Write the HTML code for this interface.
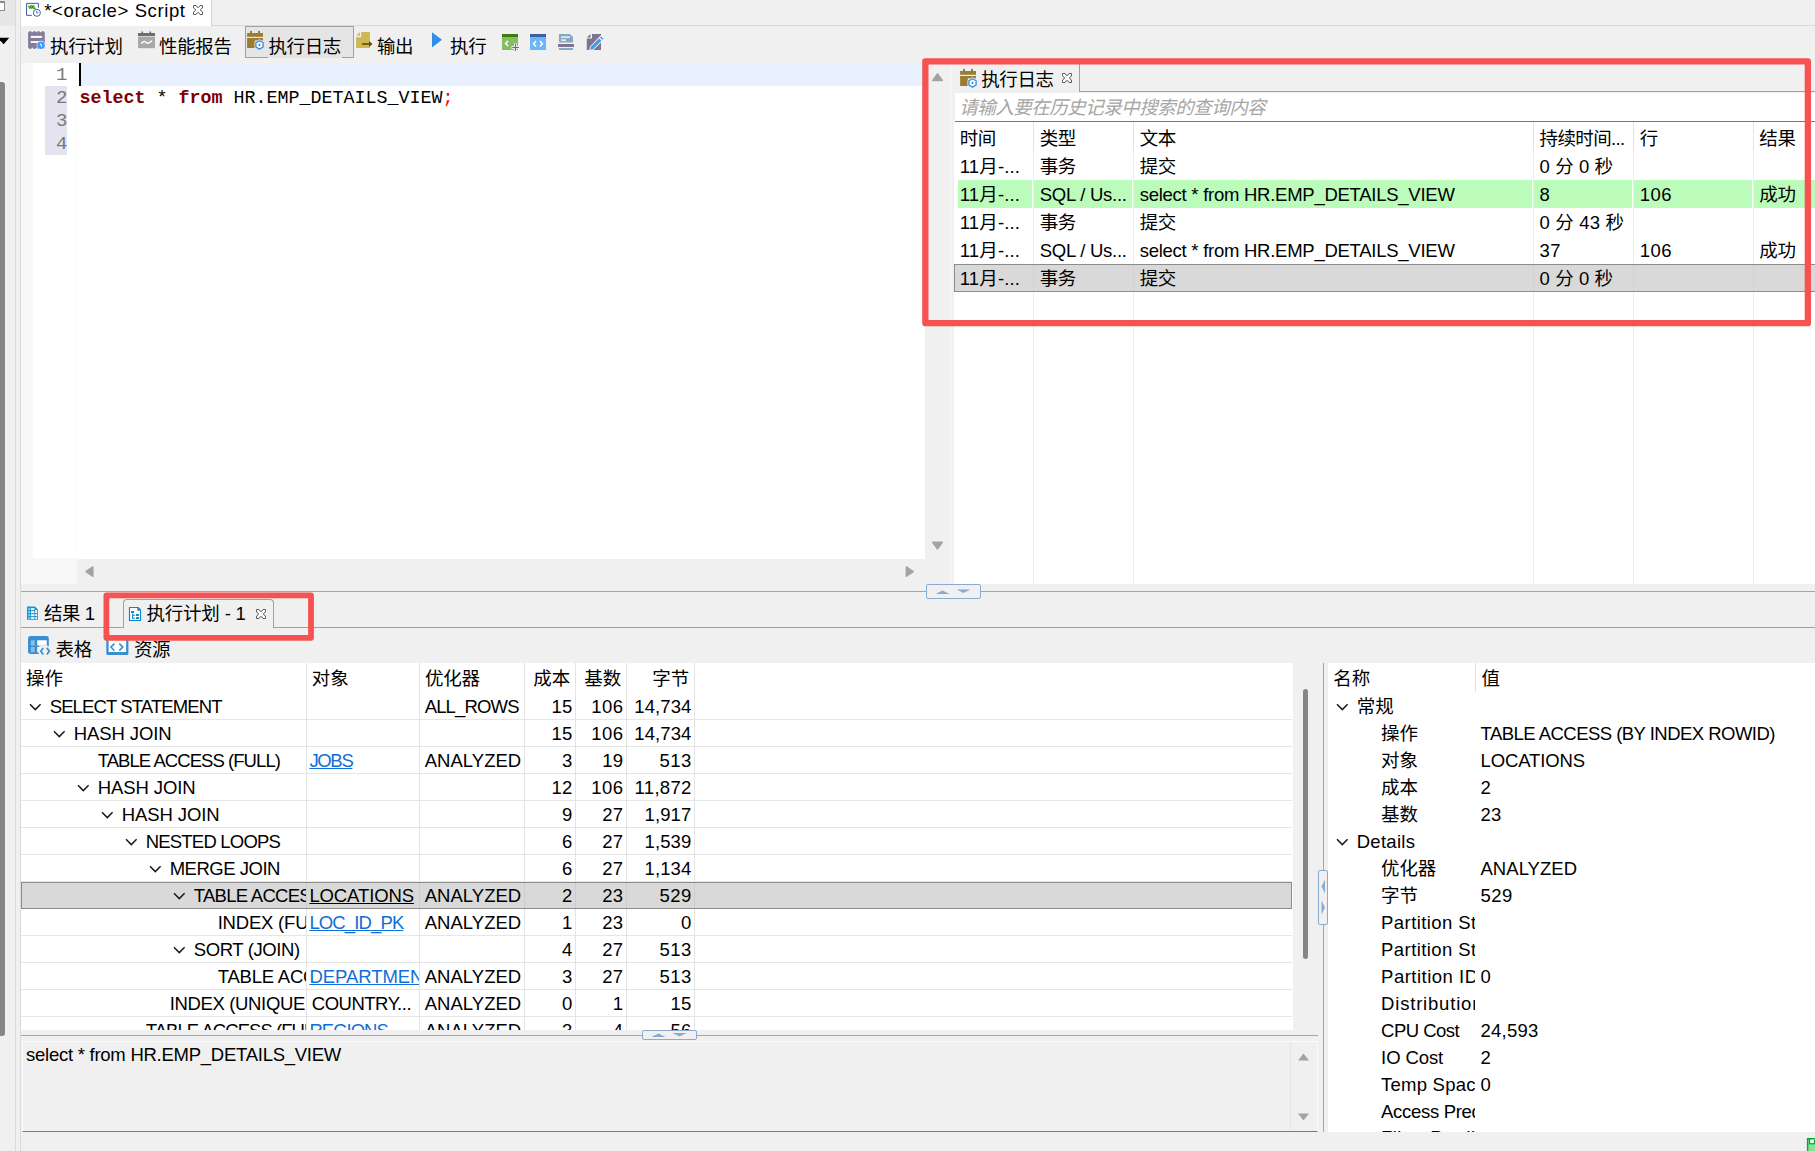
<!DOCTYPE html>
<html lang="zh"><head><meta charset="utf-8"><title>oracle Script</title>
<style>
html,body{margin:0;padding:0}
body{width:1815px;height:1151px;position:relative;overflow:hidden;background:#f0f0f0;color:#000;font-family:'Liberation Sans','Noto Sans CJK SC',sans-serif;font-size:18px}
div,svg{position:absolute;box-sizing:border-box}
.t{white-space:pre;font-size:18.5px}
.fs{font-family:'Liberation Sans','Noto Sans CJK SC',sans-serif}
.fm{font-family:'Liberation Mono','Noto Sans CJK SC',monospace}
.lk{color:#0f6fd6;text-decoration:underline;text-underline-offset:1px}
.ul{text-decoration:underline;text-underline-offset:1px}
.kw{color:#7f0000;font-weight:bold}
.ph{color:#a6a6a6;font-style:italic}
.ln{color:#787878}
</style></head><body>
<div style="left:0px;top:0px;width:15px;height:26px;background:#e7e7e7;"></div>
<div style="left:0px;top:1px;width:5px;height:10px;background:#fff;border:1px solid #8a8a8a;border-left:none;border-top-width:2px"></div>
<svg style="left:0px;top:37px" width="10" height="8" viewBox="0 0 10 8"><path d="M-2.2 0.8H9.3L3.6 7.2Z" fill="#000"/></svg>
<div style="left:15px;top:0px;width:1px;height:1151px;background:#dadada;"></div>
<div style="left:20px;top:0px;width:1px;height:1151px;background:#dadada;"></div>
<div style="left:0px;top:82px;width:5px;height:954px;background:#858585;border-radius:0 3px 3px 0"></div>
<div style="left:211px;top:25px;width:1604px;height:1px;background:#dadada;"></div>
<div style="left:21px;top:0px;width:191px;height:26px;background:#fff;border-right:1px solid #d4d4d4"></div>
<div class="t fs" style="top:-3.4px;height:27px;line-height:27px;letter-spacing:0.6px;left:44.3px;">*&lt;oracle&gt; Script</div>
<svg style="left:192px;top:4px" width="12" height="12" viewBox="0 0 12 12"><path d="M1.5 1.5H4L5.3 3.3H6.7L8 1.5H10.5V4L8.7 5.3V6.7L10.5 8V10.5H8L6.7 8.7H5.3L4 10.5H1.5V8L3.3 6.7V5.3L1.5 4Z" fill="#fff" stroke="#5c5c5c" stroke-width="1"/></svg>
<svg style="left:25px;top:2px" width="17" height="17" viewBox="0 0 17 17"><path d="M13.45 5.9V1.35H1.55V13.35H6.9" fill="none" stroke="#3b5ea8" stroke-width="1"/><path d="M3.3 5.2l1-1.6M4.3 6.6l1.6-2.6M6.6 3.6c-1.2 0-1.2 2.6 0 2.6s1.2-2.6 0-2.6zM8.9 3.2v3.2h1.6" stroke="#2f8a0f" stroke-width="1.2" fill="none"/><circle cx="11.9" cy="10.8" r="3.5" fill="#fff" stroke="#3b5ea8" stroke-width="1"/><path d="M11.7 8.9v2.1h1.6" stroke="#3b5ea8" stroke-width="0.9" fill="none"/></svg>
<div style="left:245px;top:26px;width:109px;height:32px;background:#e5e5e5;border:1px solid #a0a0a0"></div>
<svg style="left:27px;top:30px" width="19" height="20" viewBox="0 0 19 20"><path d="M1.1 2.4q2.0875-3 4.175 0q2.0875-3 4.175 0q2.0875-3 4.175 0q2.0875-3 4.175 0V17.4q-2.0875 3-4.175 0q-2.0875 3-4.175 0q-2.0875 3-4.175 0q-2.0875 3-4.175 0Z" fill="#857d9b"/><rect x="3.8" y="5.9" width="11.3" height="2" fill="#fff"/><rect x="3.8" y="11.1" width="11.3" height="1.9" fill="#fff"/><circle cx="14" cy="15.2" r="4.4" fill="#f0f0f0"/><circle cx="14" cy="15.2" r="3.8" fill="#3f9bff"/><path d="M13.2 13.6l1.7 3" stroke="#fff" stroke-width="1.1"/></svg>
<div class="t fs" style="top:32.7px;height:27px;line-height:27px;letter-spacing:-0.38px;left:50.1px;">执行计划</div>
<svg style="left:137px;top:31px" width="19" height="19" viewBox="0 0 19 19"><rect x="1" y="2" width="17" height="3" fill="#6e6e6e"/><rect x="1" y="5.6" width="17" height="11.6" fill="#a8a8a8"/><path d="M4 12.5l3.2-2.2 3.6 2.2 4.2-2.6" stroke="#fff" stroke-width="1.4" fill="none"/><rect x="4.5" y="0.5" width="1.6" height="2" fill="#6e6e6e"/><rect x="12.5" y="0.5" width="1.6" height="2" fill="#6e6e6e"/></svg>
<div class="t fs" style="top:32.7px;height:27px;line-height:27px;letter-spacing:-0.38px;left:159.1px;">性能报告</div>
<svg style="left:246px;top:30px" width="20" height="21" viewBox="0 0 20 21"><rect x="1.1" y="3" width="15.9" height="3.8" fill="#9a7d32"/><rect x="4" y="0.9" width="2" height="2.5" fill="#9a7d32"/><rect x="12" y="0.9" width="2" height="2.5" fill="#9a7d32"/><path d="M1.1 8.1H17V10.6H8.8V18H1.1Z" fill="#9a7d32"/><path d="M13.5 10.7l3.6 2.1v4.2l-3.6 2.1-3.6-2.1v-4.2Z" fill="#fff" stroke="#e5e5e5" stroke-width="2.6"/><path d="M13.5 10.7l3.6 2.1v4.2l-3.6 2.1-3.6-2.1v-4.2Z" fill="#fff" stroke="#2e8ae6" stroke-width="1.3" stroke-linejoin="round"/><circle cx="13.5" cy="14.9" r="1.1" fill="#2e8ae6"/></svg>
<div class="t fs" style="top:32.7px;height:27px;line-height:27px;letter-spacing:-0.38px;left:268.5px;">执行日志</div>
<div style="left:268px;top:57px;width:74px;height:1px;background:#e5e5e5;"></div>
<svg style="left:355px;top:30px" width="20" height="20" viewBox="0 0 20 20"><path d="M6.2 2H14.9V18H1.1V7.2H6.2Z" fill="#cdb94f"/><path d="M1.1 5.8L4.8 2.1V5.8Z" fill="#cdb94f"/><rect x="7" y="13.2" width="7.6" height="1.6" fill="#5f5210"/><path d="M14 11.1L17.6 14L14 16.9Z" fill="#5f5210"/></svg>
<div class="t fs" style="top:32.7px;height:27px;line-height:27px;letter-spacing:-0.51px;left:377.1px;">输出</div>
<svg style="left:431px;top:31px" width="12" height="18" viewBox="0 0 12 18"><path d="M1 1.2L11 8.8L1 16.4Z" fill="#2f8fe8"/></svg>
<div class="t fs" style="top:32.7px;height:27px;line-height:27px;letter-spacing:-0.26px;left:450.1px;">执行</div>
<svg style="left:502px;top:33px" width="18" height="18" viewBox="0 0 18 18"><rect x="0" y="1" width="16" height="3" fill="#3a7d0a"/><rect x="0" y="4" width="16" height="13" fill="#86bc64"/><path d="M6 8L3.6 10.5L6 13" fill="none" stroke="#fff" stroke-width="1.5"/><rect x="9" y="10" width="8" height="8" fill="#f0f0f0" opacity="0"/><path d="M9.5 14.5h8M13.5 10.5v8" stroke="#f0f0f0" stroke-width="3"/><path d="M10.2 14.5h6.8M13.5 11v6.9" stroke="#4c8c1c" stroke-width="1.1"/></svg>
<svg style="left:530px;top:33px" width="17" height="18" viewBox="0 0 17 18"><rect x="0" y="1" width="16" height="3" fill="#3b5fa2"/><rect x="0" y="4" width="16" height="13" fill="#6bb6f8"/><path d="M6 8L3.6 10.8L6 13.6M10 8l2.4 2.8L10 13.6" fill="none" stroke="#fff" stroke-width="1.5"/></svg>
<svg style="left:557px;top:33px" width="18" height="18" viewBox="0 0 18 18"><path d="M2 1H13L16 4V9.6H2Z" fill="#86a8c4"/><path d="M4 4.2h9M4 7.2h5" stroke="#fff" stroke-width="1.2"/><rect x="1" y="11" width="16" height="3" fill="#7d7590"/><rect x="2" y="15" width="14" height="2" fill="#86a8c4"/></svg>
<svg style="left:586px;top:33px" width="18" height="18" viewBox="0 0 18 18"><path d="M6 1H15V17H0.8V5.5H6Z" fill="#7d7590"/><path d="M0.8 4.5L4.5 1V4.5Z" fill="#7d7590"/><path d="M13 5.4L15.4 7.8L7 16.2L4.2 16.8L4.8 14ZM14 4.4L15 3.4L17.4 5.8L16.4 6.8Z" fill="#3f9ae8" stroke="#f0f0f0" stroke-width="1.8" stroke-linejoin="round"/><path d="M13 5.4L15.4 7.8L7 16.2L4.2 16.8L4.8 14ZM14 4.4L15 3.4L17.4 5.8L16.4 6.8Z" fill="#3f9ae8"/></svg>
<div style="left:21px;top:63px;width:12px;height:521px;background:#f8f8f8;"></div>
<div style="left:33px;top:63px;width:892px;height:496px;background:#fff;"></div>
<div style="left:33px;top:558px;width:44px;height:26px;background:#f8f8f8;"></div>
<div style="left:76px;top:63px;width:1px;height:495px;background:#fbfbfb;"></div>
<div style="left:79px;top:63px;width:846px;height:23px;background:#e8f2fe;"></div>
<div style="left:45px;top:86px;width:22px;height:69px;background:#e4e4f1;"></div>
<div style="left:79px;top:63px;width:2px;height:23px;background:#000;"></div>
<div class="t fm ln" style="top:64px;height:23px;line-height:23px;font-size:19px;right:1747.7px;">1</div>
<div class="t fm ln" style="top:87px;height:23px;line-height:23px;font-size:19px;right:1747.7px;">2</div>
<div class="t fm ln" style="top:110px;height:23px;line-height:23px;font-size:19px;right:1747.7px;">3</div>
<div class="t fm ln" style="top:133px;height:23px;line-height:23px;font-size:19px;right:1747.7px;">4</div>
<div class="t fm" style="left:79.5px;top:87px;height:23px;line-height:23px;font-size:18.33px"><span class="kw">select</span> * <span class="kw">from</span> HR.EMP_DETAILS_VIEW<span style="color:#f00">;</span></div>
<svg style="left:83px;top:565px" width="12" height="13" viewBox="0 0 12 13"><path d="M9.8 2L3 6.6L9.8 11.2Z" fill="#a3a3a3" stroke="#a3a3a3" stroke-width="1.6" stroke-linejoin="round"/></svg>
<svg style="left:904px;top:565px" width="12" height="13" viewBox="0 0 12 13"><path d="M2.4 2L9.2 6.6L2.4 11.2Z" fill="#a3a3a3" stroke="#a3a3a3" stroke-width="1.6" stroke-linejoin="round"/></svg>
<svg style="left:931px;top:72px" width="13" height="10" viewBox="0 0 13 10"><path d="M1.8 8.4L6.5 2L11.2 8.4Z" fill="#a3a3a3" stroke="#a3a3a3" stroke-width="1.6" stroke-linejoin="round"/></svg>
<svg style="left:931px;top:540px" width="13" height="10" viewBox="0 0 13 10"><path d="M1.8 2.4L6.5 8.8L11.2 2.4Z" fill="#a3a3a3" stroke="#a3a3a3" stroke-width="1.6" stroke-linejoin="round"/></svg>
<div style="left:950px;top:63px;width:1px;height:521px;background:#f8f8f8;"></div>
<div style="left:1079px;top:64px;width:1px;height:28px;background:#a0a0a0;"></div>
<div style="left:1079px;top:91px;width:736px;height:1px;background:#a0a0a0;"></div>
<svg style="left:959px;top:68px" width="20" height="21" viewBox="0 0 20 21"><rect x="1.1" y="3" width="15.9" height="3.8" fill="#9a7d32"/><rect x="4" y="0.9" width="2" height="2.5" fill="#9a7d32"/><rect x="12" y="0.9" width="2" height="2.5" fill="#9a7d32"/><path d="M1.1 8.1H17V10.6H8.8V18H1.1Z" fill="#9a7d32"/><path d="M13.5 10.7l3.6 2.1v4.2l-3.6 2.1-3.6-2.1v-4.2Z" fill="#fff" stroke="#f0f0f0" stroke-width="2.6"/><path d="M13.5 10.7l3.6 2.1v4.2l-3.6 2.1-3.6-2.1v-4.2Z" fill="#fff" stroke="#2e8ae6" stroke-width="1.3" stroke-linejoin="round"/><circle cx="13.5" cy="14.9" r="1.1" fill="#2e8ae6"/></svg>
<div class="t fs" style="top:65.6px;height:27px;line-height:27px;letter-spacing:-0.45px;left:981.3px;">执行日志</div>
<svg style="left:1061px;top:72px" width="12" height="12" viewBox="0 0 12 12"><path d="M1.5 1.5H4L5.3 3.3H6.7L8 1.5H10.5V4L8.7 5.3V6.7L10.5 8V10.5H8L6.7 8.7H5.3L4 10.5H1.5V8L3.3 6.7V5.3L1.5 4Z" fill="#fff" stroke="#5c5c5c" stroke-width="1"/></svg>
<div style="left:955px;top:93px;width:860px;height:29px;background:#fff;border-bottom:1px solid #7a7a7a"></div>
<div class="t fs ph" style="top:94px;height:28px;line-height:28px;letter-spacing:-0.5px;left:959.3px;">请输入要在历史记录中搜索的查询内容</div>
<div style="left:954px;top:122px;width:861px;height:462px;background:#fff;"></div>
<div style="left:1033px;top:122px;width:1px;height:462px;background:#e6eefa;"></div>
<div style="left:1033px;top:122px;width:1px;height:29px;background:#e2e2e2;"></div>
<div style="left:1133px;top:122px;width:1px;height:462px;background:#e6eefa;"></div>
<div style="left:1133px;top:122px;width:1px;height:29px;background:#e2e2e2;"></div>
<div style="left:1533px;top:122px;width:1px;height:462px;background:#e6eefa;"></div>
<div style="left:1533px;top:122px;width:1px;height:29px;background:#e2e2e2;"></div>
<div style="left:1633px;top:122px;width:1px;height:462px;background:#e6eefa;"></div>
<div style="left:1633px;top:122px;width:1px;height:29px;background:#e2e2e2;"></div>
<div style="left:1753px;top:122px;width:1px;height:462px;background:#e6eefa;"></div>
<div style="left:1753px;top:122px;width:1px;height:29px;background:#e2e2e2;"></div>
<div style="left:958px;top:180px;width:74px;height:28px;background:#bbfcbb;"></div>
<div style="left:1034px;top:180px;width:98px;height:28px;background:#bbfcbb;"></div>
<div style="left:1134px;top:180px;width:398px;height:28px;background:#bbfcbb;"></div>
<div style="left:1534px;top:180px;width:98px;height:28px;background:#bbfcbb;"></div>
<div style="left:1634px;top:180px;width:118px;height:28px;background:#bbfcbb;"></div>
<div style="left:1754px;top:180px;width:61px;height:28px;background:#bbfcbb;"></div>
<div style="left:954px;top:264px;width:861px;height:28px;background:#d9d9d9;border:1px solid #8c8c8c;border-right:none"></div>
<div style="left:1033px;top:265px;width:1px;height:26px;background:#cfd4dc;"></div>
<div style="left:1133px;top:265px;width:1px;height:26px;background:#cfd4dc;"></div>
<div style="left:1533px;top:265px;width:1px;height:26px;background:#cfd4dc;"></div>
<div style="left:1633px;top:265px;width:1px;height:26px;background:#cfd4dc;"></div>
<div style="left:1753px;top:265px;width:1px;height:26px;background:#cfd4dc;"></div>
<div class="t fs" style="top:124.5px;height:28px;line-height:28px;letter-spacing:-0.36px;left:959.7px;">时间</div>
<div class="t fs" style="top:124.5px;height:28px;line-height:28px;letter-spacing:-0.36px;left:1039.7px;">类型</div>
<div class="t fs" style="top:124.5px;height:28px;line-height:28px;letter-spacing:-0.36px;left:1139.7px;">文本</div>
<div class="t fs" style="top:124.5px;height:28px;line-height:28px;letter-spacing:-0.63px;left:1539.6px;">持续时间...</div>
<div class="t fs" style="top:124.5px;height:28px;line-height:28px;left:1639.7px;">行</div>
<div class="t fs" style="top:124.5px;height:28px;line-height:28px;letter-spacing:-0.26px;left:1759.3px;">结果</div>
<div class="t fs" style="top:153px;height:28px;line-height:28px;letter-spacing:0.17px;left:959.7px;">11月-...</div>
<div class="t fs" style="top:153px;height:28px;line-height:28px;letter-spacing:-0.36px;left:1039.7px;">事务</div>
<div class="t fs" style="top:153px;height:28px;line-height:28px;letter-spacing:-0.36px;left:1139.7px;">提交</div>
<div class="t fs" style="top:153px;height:28px;line-height:28px;letter-spacing:0.07px;left:1539.6px;">0 分 0 秒</div>
<div class="t fs" style="top:181px;height:28px;line-height:28px;letter-spacing:0.17px;left:959.7px;">11月-...</div>
<div class="t fs" style="top:181px;height:28px;line-height:28px;letter-spacing:-0.25px;left:1039.7px;">SQL / Us...</div>
<div class="t fs" style="top:181px;height:28px;line-height:28px;letter-spacing:-0.26px;left:1139.7px;">select * from HR.EMP_DETAILS_VIEW</div>
<div class="t fs" style="top:181px;height:28px;line-height:28px;left:1539.6px;">8</div>
<div class="t fs" style="top:181px;height:28px;line-height:28px;letter-spacing:0.54px;left:1639.7px;">106</div>
<div class="t fs" style="top:181px;height:28px;line-height:28px;letter-spacing:-0.26px;left:1759.3px;">成功</div>
<div class="t fs" style="top:209px;height:28px;line-height:28px;letter-spacing:0.17px;left:959.7px;">11月-...</div>
<div class="t fs" style="top:209px;height:28px;line-height:28px;letter-spacing:-0.36px;left:1039.7px;">事务</div>
<div class="t fs" style="top:209px;height:28px;line-height:28px;letter-spacing:-0.36px;left:1139.7px;">提交</div>
<div class="t fs" style="top:209px;height:28px;line-height:28px;letter-spacing:0.15px;left:1539.6px;">0 分 43 秒</div>
<div class="t fs" style="top:237px;height:28px;line-height:28px;letter-spacing:0.17px;left:959.7px;">11月-...</div>
<div class="t fs" style="top:237px;height:28px;line-height:28px;letter-spacing:-0.25px;left:1039.7px;">SQL / Us...</div>
<div class="t fs" style="top:237px;height:28px;line-height:28px;letter-spacing:-0.26px;left:1139.7px;">select * from HR.EMP_DETAILS_VIEW</div>
<div class="t fs" style="top:237px;height:28px;line-height:28px;letter-spacing:0.46px;left:1539.6px;">37</div>
<div class="t fs" style="top:237px;height:28px;line-height:28px;letter-spacing:0.54px;left:1639.7px;">106</div>
<div class="t fs" style="top:237px;height:28px;line-height:28px;letter-spacing:-0.26px;left:1759.3px;">成功</div>
<div class="t fs" style="top:265px;height:28px;line-height:28px;letter-spacing:0.17px;left:959.7px;">11月-...</div>
<div class="t fs" style="top:265px;height:28px;line-height:28px;letter-spacing:-0.36px;left:1039.7px;">事务</div>
<div class="t fs" style="top:265px;height:28px;line-height:28px;letter-spacing:-0.36px;left:1139.7px;">提交</div>
<div class="t fs" style="top:265px;height:28px;line-height:28px;letter-spacing:0.07px;left:1539.6px;">0 分 0 秒</div>
<div style="left:21px;top:591px;width:1794px;height:1px;background:#8aaacf;"></div>
<div style="left:926px;top:584px;width:55px;height:15px;background:#f0f0f0;border:1px solid #8aaacf;border-radius:2px"></div>
<svg style="left:934px;top:588px" width="40" height="7" viewBox="0 0 40 7"><path d="M1.5 6L8.5 2.5L15.5 6Z" fill="#8aaacf"/><path d="M22.5 1.5L29.5 5L36.5 1.5Z" fill="#8aaacf"/></svg>
<div style="left:21px;top:627px;width:1794px;height:1px;background:#a0a0a0;"></div>
<div style="left:123px;top:599px;width:151px;height:29px;background:#f0f0f0;border:1px solid #a0a0a0;border-bottom:none;border-radius:4px 4px 0 0"></div>
<svg style="left:26px;top:605px" width="13" height="16" viewBox="0 0 13 16"><path d="M1 1.6H9L11.9 4.5V14.8H1Z" fill="#1b93d1"/><g fill="#fff"><rect x="5" y="3.2" width="3.4" height="1.9"/><rect x="5" y="6.2" width="3.4" height="1.9"/><rect x="5" y="9.2" width="3.4" height="1.9"/><rect x="5" y="12.2" width="3.4" height="1.7"/><rect x="9.2" y="5" width="1.9" height="1"/><rect x="9.2" y="6.2" width="1.9" height="1.9"/><rect x="9.2" y="9.2" width="1.9" height="1.9"/><rect x="9.2" y="12.2" width="1.9" height="1.7"/></g><g fill="#8fd0ee"><rect x="2.2" y="3.2" width="2" height="1.9"/><rect x="2.2" y="6.2" width="2" height="1.9"/><rect x="2.2" y="9.2" width="2" height="1.9"/><rect x="2.2" y="12.2" width="2" height="1.7"/></g></svg>
<div class="t fs" style="top:600px;height:27px;line-height:27px;letter-spacing:-0.46px;left:43.9px;">结果 1</div>
<svg style="left:128px;top:606px" width="14" height="16" viewBox="0 0 14 16"><path d="M1.5 1.5H10L12.5 4V14.5H1.5Z" fill="#fff" stroke="#0a87cc" stroke-width="1.2" stroke-linejoin="round"/><path d="M9.3 1.5V4.7H12.5Z" fill="#0a87cc"/><rect x="3" y="5.1" width="3.1" height="1.8" rx="0.4" fill="#0a7fc8"/><rect x="8" y="8" width="3" height="1.9" rx="0.4" fill="#0a7fc8"/><rect x="8" y="11.1" width="3" height="1.8" rx="0.4" fill="#0a7fc8"/><path d="M4.6 8V12.3H6.8M4.6 9.3H6.8" fill="none" stroke="#0a87cc" stroke-width="1.1" stroke-linecap="round"/></svg>
<div class="t fs" style="top:600px;height:27px;line-height:27px;letter-spacing:-0.18px;left:146.4px;">执行计划 - 1</div>
<svg style="left:255px;top:608px" width="12" height="12" viewBox="0 0 12 12"><path d="M1.5 1.5H4L5.3 3.3H6.7L8 1.5H10.5V4L8.7 5.3V6.7L10.5 8V10.5H8L6.7 8.7H5.3L4 10.5H1.5V8L3.3 6.7V5.3L1.5 4Z" fill="#fff" stroke="#5c5c5c" stroke-width="1"/></svg>
<svg style="left:27px;top:635px" width="25" height="21" viewBox="0 0 25 21"><rect x="1" y="1" width="20.8" height="17.9" rx="2.4" fill="#3a8fd0"/><rect x="10.2" y="5.3" width="9.6" height="5.3" fill="#fff"/><rect x="3.9" y="5.3" width="3.8" height="5.3" fill="#86c0ea"/><rect x="3.9" y="12" width="3.8" height="5.3" fill="#86c0ea"/><rect x="10.2" y="12" width="3" height="5.3" fill="#fff"/><path d="M12.2 10.6h8.2l2.4 1.6 1.6 4-1.4 4.6h-10.4l-1.6-4.6 1.2-4Z" fill="#f0f0f0"/><path d="M16.2 12.9l-2.4 3.3 2.4 3.3M19.8 12.9l2.6 3.3-2.6 3.3" stroke="#3a8fd0" stroke-width="1.7" fill="none"/></svg>
<div class="t fs" style="top:636.3px;height:27px;line-height:27px;letter-spacing:-0.26px;left:55.5px;">表格</div>
<svg style="left:105px;top:635px" width="25" height="21" viewBox="0 0 25 21"><path d="M1.3 1.5H23.4V18.4Q23.4 19.9 21.9 19.9H2.8Q1.3 19.9 1.3 18.4Z" fill="#3a8fd0"/><rect x="3.6" y="3.8" width="17.5" height="13.2" fill="#fff"/><path d="M9.4 8.6L5.9 12.1l3.5 3.5M14.3 8.6l3.5 3.5-3.5 3.5" stroke="#3a8fd0" stroke-width="1.5" fill="none"/></svg>
<div class="t fs" style="top:636.3px;height:27px;line-height:27px;letter-spacing:-0.51px;left:134.0px;">资源</div>
<div style="left:21px;top:663px;width:1272px;height:367px;background:#fff;overflow:hidden"></div>
<div style="left:306px;top:663px;width:1px;height:367px;background:#e4e4e4;"></div>
<div style="left:419px;top:663px;width:1px;height:367px;background:#e4e4e4;"></div>
<div style="left:524px;top:663px;width:1px;height:367px;background:#e4e4e4;"></div>
<div style="left:575px;top:663px;width:1px;height:367px;background:#e4e4e4;"></div>
<div style="left:626px;top:663px;width:1px;height:367px;background:#e4e4e4;"></div>
<div style="left:694px;top:663px;width:1px;height:367px;background:#e4e4e4;"></div>
<div style="left:21px;top:719px;width:1271px;height:1px;background:#e6e6e6;"></div>
<div style="left:21px;top:746px;width:1271px;height:1px;background:#e6e6e6;"></div>
<div style="left:21px;top:773px;width:1271px;height:1px;background:#e6e6e6;"></div>
<div style="left:21px;top:800px;width:1271px;height:1px;background:#e6e6e6;"></div>
<div style="left:21px;top:827px;width:1271px;height:1px;background:#e6e6e6;"></div>
<div style="left:21px;top:854px;width:1271px;height:1px;background:#e6e6e6;"></div>
<div style="left:21px;top:881px;width:1271px;height:1px;background:#e6e6e6;"></div>
<div style="left:21px;top:908px;width:1271px;height:1px;background:#e6e6e6;"></div>
<div style="left:21px;top:935px;width:1271px;height:1px;background:#e6e6e6;"></div>
<div style="left:21px;top:962px;width:1271px;height:1px;background:#e6e6e6;"></div>
<div style="left:21px;top:989px;width:1271px;height:1px;background:#e6e6e6;"></div>
<div style="left:21px;top:1016px;width:1271px;height:1px;background:#e6e6e6;"></div>
<div style="left:21px;top:882px;width:1271px;height:27px;background:#d9d9d9;border:1px solid #8c8c8c"></div>
<div style="left:306px;top:883px;width:1px;height:25px;background:#cdcdcd;"></div>
<div style="left:419px;top:883px;width:1px;height:25px;background:#cdcdcd;"></div>
<div style="left:524px;top:883px;width:1px;height:25px;background:#cdcdcd;"></div>
<div style="left:575px;top:883px;width:1px;height:25px;background:#cdcdcd;"></div>
<div style="left:626px;top:883px;width:1px;height:25px;background:#cdcdcd;"></div>
<div style="left:694px;top:883px;width:1px;height:25px;background:#cdcdcd;"></div>
<div class="t fs" style="top:665px;height:27px;line-height:27px;left:26.1px;">操作</div>
<div class="t fs" style="top:665px;height:27px;line-height:27px;left:311.8px;">对象</div>
<div class="t fs" style="top:665px;height:27px;line-height:27px;letter-spacing:-0.17px;left:424.9px;">优化器</div>
<div class="t fs" style="top:665px;height:27px;line-height:27px;right:1244.7px;">成本</div>
<div class="t fs" style="top:665px;height:27px;line-height:27px;right:1193.7px;">基数</div>
<div class="t fs" style="top:665px;height:27px;line-height:27px;right:1125.7px;">字节</div>
<div style="left:21px;top:663px;width:1272px;height:367px;overflow:hidden">
<svg style="left:8px;top:40px" width="13" height="8" viewBox="0 0 13 8"><path d="M1 1.2L6.3 6.6L11.6 1.2" fill="none" stroke="#1a1a1a" stroke-width="1.5"/></svg>
<div class="t fs" style="top:30px;height:27px;line-height:27px;letter-spacing:-0.88px;left:28.7px;width:256.6px;overflow:hidden;">SELECT STATEMENT</div>
<div class="t fs" style="top:30px;height:27px;line-height:27px;letter-spacing:-0.85px;left:403.7px;">ALL_ROWS</div>
<div class="t fs" style="top:30px;height:27px;line-height:27px;letter-spacing:0.21px;right:720.59px;">15</div>
<div class="t fs" style="top:30px;height:27px;line-height:27px;letter-spacing:0.47px;right:669.53px;">106</div>
<div class="t fs" style="top:30px;height:27px;line-height:27px;letter-spacing:0.07px;right:601.63px;">14,734</div>
<svg style="left:32px;top:67px" width="13" height="8" viewBox="0 0 13 8"><path d="M1 1.2L6.3 6.6L11.6 1.2" fill="none" stroke="#1a1a1a" stroke-width="1.5"/></svg>
<div class="t fs" style="top:57px;height:27px;line-height:27px;letter-spacing:-0.1px;left:52.7px;width:232.60000000000002px;overflow:hidden;">HASH JOIN</div>
<div class="t fs" style="top:57px;height:27px;line-height:27px;letter-spacing:0.21px;right:720.59px;">15</div>
<div class="t fs" style="top:57px;height:27px;line-height:27px;letter-spacing:0.47px;right:669.53px;">106</div>
<div class="t fs" style="top:57px;height:27px;line-height:27px;letter-spacing:0.07px;right:601.63px;">14,734</div>
<div class="t fs" style="top:84px;height:27px;line-height:27px;letter-spacing:-0.94px;left:76.7px;width:208.60000000000002px;overflow:hidden;">TABLE ACCESS (FULL)</div>
<div class="t fs lk" style="top:84px;height:27px;line-height:27px;letter-spacing:-1.33px;left:288.4px;width:109.6px;overflow:hidden;">JOBS</div>
<div class="t fs" style="top:84px;height:27px;line-height:27px;letter-spacing:0.03px;left:403.7px;">ANALYZED</div>
<div class="t fs" style="top:84px;height:27px;line-height:27px;right:720.8px;">3</div>
<div class="t fs" style="top:84px;height:27px;line-height:27px;letter-spacing:0.21px;right:669.79px;">19</div>
<div class="t fs" style="top:84px;height:27px;line-height:27px;letter-spacing:0.47px;right:601.23px;">513</div>
<svg style="left:56px;top:121px" width="13" height="8" viewBox="0 0 13 8"><path d="M1 1.2L6.3 6.6L11.6 1.2" fill="none" stroke="#1a1a1a" stroke-width="1.5"/></svg>
<div class="t fs" style="top:111px;height:27px;line-height:27px;letter-spacing:-0.1px;left:76.7px;width:208.60000000000002px;overflow:hidden;">HASH JOIN</div>
<div class="t fs" style="top:111px;height:27px;line-height:27px;letter-spacing:0.21px;right:720.59px;">12</div>
<div class="t fs" style="top:111px;height:27px;line-height:27px;letter-spacing:0.47px;right:669.53px;">106</div>
<div class="t fs" style="top:111px;height:27px;line-height:27px;letter-spacing:0.3px;right:601.4px;">11,872</div>
<svg style="left:80px;top:148px" width="13" height="8" viewBox="0 0 13 8"><path d="M1 1.2L6.3 6.6L11.6 1.2" fill="none" stroke="#1a1a1a" stroke-width="1.5"/></svg>
<div class="t fs" style="top:138px;height:27px;line-height:27px;letter-spacing:-0.1px;left:100.7px;width:184.60000000000002px;overflow:hidden;">HASH JOIN</div>
<div class="t fs" style="top:138px;height:27px;line-height:27px;right:720.8px;">9</div>
<div class="t fs" style="top:138px;height:27px;line-height:27px;letter-spacing:0.21px;right:669.79px;">27</div>
<div class="t fs" style="top:138px;height:27px;line-height:27px;letter-spacing:0.14px;right:601.56px;">1,917</div>
<svg style="left:104px;top:175px" width="13" height="8" viewBox="0 0 13 8"><path d="M1 1.2L6.3 6.6L11.6 1.2" fill="none" stroke="#1a1a1a" stroke-width="1.5"/></svg>
<div class="t fs" style="top:165px;height:27px;line-height:27px;letter-spacing:-0.79px;left:124.7px;width:160.60000000000002px;overflow:hidden;">NESTED LOOPS</div>
<div class="t fs" style="top:165px;height:27px;line-height:27px;right:720.8px;">6</div>
<div class="t fs" style="top:165px;height:27px;line-height:27px;letter-spacing:0.21px;right:669.79px;">27</div>
<div class="t fs" style="top:165px;height:27px;line-height:27px;letter-spacing:0.14px;right:601.56px;">1,539</div>
<svg style="left:128px;top:202px" width="13" height="8" viewBox="0 0 13 8"><path d="M1 1.2L6.3 6.6L11.6 1.2" fill="none" stroke="#1a1a1a" stroke-width="1.5"/></svg>
<div class="t fs" style="top:192px;height:27px;line-height:27px;letter-spacing:-0.49px;left:148.7px;width:136.60000000000002px;overflow:hidden;">MERGE JOIN</div>
<div class="t fs" style="top:192px;height:27px;line-height:27px;right:720.8px;">6</div>
<div class="t fs" style="top:192px;height:27px;line-height:27px;letter-spacing:0.21px;right:669.79px;">27</div>
<div class="t fs" style="top:192px;height:27px;line-height:27px;letter-spacing:0.14px;right:601.56px;">1,134</div>
<svg style="left:152px;top:229px" width="13" height="8" viewBox="0 0 13 8"><path d="M1 1.2L6.3 6.6L11.6 1.2" fill="none" stroke="#1a1a1a" stroke-width="1.5"/></svg>
<div class="t fs" style="top:219px;height:27px;line-height:27px;letter-spacing:-0.71px;left:172.7px;width:112.60000000000002px;overflow:hidden;">TABLE ACCESS (BY INDEX ROWID)</div>
<div class="t fs ul" style="top:219px;height:27px;line-height:27px;letter-spacing:-0.11px;left:288.4px;width:109.6px;overflow:hidden;">LOCATIONS</div>
<div class="t fs" style="top:219px;height:27px;line-height:27px;letter-spacing:0.03px;left:403.7px;">ANALYZED</div>
<div class="t fs" style="top:219px;height:27px;line-height:27px;right:720.8px;">2</div>
<div class="t fs" style="top:219px;height:27px;line-height:27px;letter-spacing:0.21px;right:669.79px;">23</div>
<div class="t fs" style="top:219px;height:27px;line-height:27px;letter-spacing:0.47px;right:601.23px;">529</div>
<div class="t fs" style="top:246px;height:27px;line-height:27px;letter-spacing:-0.21px;left:196.7px;width:88.60000000000002px;overflow:hidden;">INDEX (FULL SCAN)</div>
<div class="t fs lk" style="top:246px;height:27px;line-height:27px;letter-spacing:-0.87px;left:288.4px;width:109.6px;overflow:hidden;">LOC_ID_PK</div>
<div class="t fs" style="top:246px;height:27px;line-height:27px;letter-spacing:0.03px;left:403.7px;">ANALYZED</div>
<div class="t fs" style="top:246px;height:27px;line-height:27px;right:720.8px;">1</div>
<div class="t fs" style="top:246px;height:27px;line-height:27px;letter-spacing:0.21px;right:669.79px;">23</div>
<div class="t fs" style="top:246px;height:27px;line-height:27px;right:601.7px;">0</div>
<svg style="left:152px;top:283px" width="13" height="8" viewBox="0 0 13 8"><path d="M1 1.2L6.3 6.6L11.6 1.2" fill="none" stroke="#1a1a1a" stroke-width="1.5"/></svg>
<div class="t fs" style="top:273px;height:27px;line-height:27px;letter-spacing:-0.38px;left:172.7px;width:112.60000000000002px;overflow:hidden;">SORT (JOIN)</div>
<div class="t fs" style="top:273px;height:27px;line-height:27px;right:720.8px;">4</div>
<div class="t fs" style="top:273px;height:27px;line-height:27px;letter-spacing:0.21px;right:669.79px;">27</div>
<div class="t fs" style="top:273px;height:27px;line-height:27px;letter-spacing:0.47px;right:601.23px;">513</div>
<div class="t fs" style="top:300px;height:27px;line-height:27px;letter-spacing:-0.21px;left:196.7px;width:88.60000000000002px;overflow:hidden;">TABLE ACCESS (FULL)</div>
<div class="t fs lk" style="top:300px;height:27px;line-height:27px;letter-spacing:-0.05px;left:288.4px;width:109.6px;overflow:hidden;">DEPARTMENTS</div>
<div class="t fs" style="top:300px;height:27px;line-height:27px;letter-spacing:0.03px;left:403.7px;">ANALYZED</div>
<div class="t fs" style="top:300px;height:27px;line-height:27px;right:720.8px;">3</div>
<div class="t fs" style="top:300px;height:27px;line-height:27px;letter-spacing:0.21px;right:669.79px;">27</div>
<div class="t fs" style="top:300px;height:27px;line-height:27px;letter-spacing:0.47px;right:601.23px;">513</div>
<div class="t fs" style="top:327px;height:27px;line-height:27px;letter-spacing:-0.35px;left:148.7px;width:136.60000000000002px;overflow:hidden;">INDEX (UNIQUE SCAN)</div>
<div class="t fs" style="top:327px;height:27px;line-height:27px;letter-spacing:-0.49px;left:290.8px;width:107.20000000000002px;overflow:hidden;">COUNTRY...</div>
<div class="t fs" style="top:327px;height:27px;line-height:27px;letter-spacing:0.03px;left:403.7px;">ANALYZED</div>
<div class="t fs" style="top:327px;height:27px;line-height:27px;right:720.8px;">0</div>
<div class="t fs" style="top:327px;height:27px;line-height:27px;right:670px;">1</div>
<div class="t fs" style="top:327px;height:27px;line-height:27px;letter-spacing:0.21px;right:601.49px;">15</div>
<div class="t fs" style="top:354px;height:27px;line-height:27px;letter-spacing:-0.94px;left:124.7px;width:160.60000000000002px;overflow:hidden;">TABLE ACCESS (FULL)</div>
<div class="t fs lk" style="top:354px;height:27px;line-height:27px;letter-spacing:-0.98px;left:288.4px;width:109.6px;overflow:hidden;">REGIONS</div>
<div class="t fs" style="top:354px;height:27px;line-height:27px;letter-spacing:0.03px;left:403.7px;">ANALYZED</div>
<div class="t fs" style="top:354px;height:27px;line-height:27px;right:720.8px;">3</div>
<div class="t fs" style="top:354px;height:27px;line-height:27px;right:670px;">4</div>
<div class="t fs" style="top:354px;height:27px;line-height:27px;letter-spacing:0.21px;right:601.49px;">56</div>
</div>
<div style="left:1303px;top:689px;width:5px;height:270px;background:#858585;border-radius:3px"></div>
<div style="left:21px;top:1035px;width:1297px;height:1px;background:#8aaacf;"></div>
<div style="left:642px;top:1030px;width:55px;height:10px;background:#f0f0f0;border:1px solid #8aaacf;border-radius:2px"></div>
<svg style="left:650px;top:1032px" width="40" height="6" viewBox="0 0 40 6"><path d="M1.5 5L8.5 1.5L15.5 5Z" fill="#8aaacf"/><path d="M22.5 1L29.5 4.5L36.5 1Z" fill="#8aaacf"/></svg>
<div style="left:22px;top:1041px;width:1296px;height:91px;background:#f0f0f0;border-bottom:1px solid #7a7a7a;border-left:1px solid #fafafa;border-top:1px solid #fafafa;border-right:1px solid #fafafa"></div>
<div style="left:1290px;top:1042px;width:1px;height:89px;background:#e6e6e6;"></div>
<div class="t fs" style="top:1041px;height:27px;line-height:27px;letter-spacing:-0.26px;left:26.1px;">select * from HR.EMP_DETAILS_VIEW</div>
<svg style="left:1297px;top:1052px" width="13" height="10" viewBox="0 0 13 10"><path d="M1 8.5L6.5 1.5L12 8.5Z" fill="#a3a3a3"/></svg>
<svg style="left:1297px;top:1112px" width="13" height="10" viewBox="0 0 13 10"><path d="M1 1.5L6.5 8.5L12 1.5Z" fill="#a3a3a3"/></svg>
<div style="left:1323px;top:663px;width:1px;height:469px;background:#8aaacf;"></div>
<div style="left:1318px;top:870px;width:10px;height:55px;background:#f0f0f0;border:1px solid #8aaacf;border-radius:2px"></div>
<svg style="left:1320px;top:878px" width="6" height="40" viewBox="0 0 6 40"><path d="M5 1.5L1.5 8.5L5 15.5Z" fill="#8aaacf"/><path d="M1.5 22.5L5 29.5L1.5 36.5Z" fill="#8aaacf"/></svg>
<div style="left:1328px;top:663px;width:487px;height:469px;background:#fff;"></div>
<div style="left:1475px;top:663px;width:1px;height:29px;background:#e2e2e2;"></div>
<div style="left:1328px;top:663px;width:487px;height:469px;overflow:hidden">
<div class="t fs" style="top:2px;height:27px;line-height:27px;left:5.3px;">名称</div>
<div class="t fs" style="top:2px;height:27px;line-height:27px;left:153.4px;">值</div>
<svg style="left:8.400000000000091px;top:40px" width="13" height="8" viewBox="0 0 13 8"><path d="M1 1.2L6.3 6.6L11.6 1.2" fill="none" stroke="#1a1a1a" stroke-width="1.5"/></svg>
<div class="t fs" style="top:30px;height:27px;line-height:27px;left:28.7px;">常规</div>
<div class="t fs" style="top:57px;height:27px;line-height:27px;left:53.1px;width:94.4px;overflow:hidden;">操作</div>
<div class="t fs" style="top:57px;height:27px;line-height:27px;letter-spacing:-0.53px;left:152.5px;">TABLE ACCESS (BY INDEX ROWID)</div>
<div class="t fs" style="top:84px;height:27px;line-height:27px;left:53.1px;width:94.4px;overflow:hidden;">对象</div>
<div class="t fs" style="top:84px;height:27px;line-height:27px;letter-spacing:-0.11px;left:152.5px;">LOCATIONS</div>
<div class="t fs" style="top:111px;height:27px;line-height:27px;left:53.1px;width:94.4px;overflow:hidden;">成本</div>
<div class="t fs" style="top:111px;height:27px;line-height:27px;left:152.5px;">2</div>
<div class="t fs" style="top:138px;height:27px;line-height:27px;left:53.1px;width:94.4px;overflow:hidden;">基数</div>
<div class="t fs" style="top:138px;height:27px;line-height:27px;letter-spacing:0.21px;left:152.5px;">23</div>
<svg style="left:8.400000000000091px;top:175px" width="13" height="8" viewBox="0 0 13 8"><path d="M1 1.2L6.3 6.6L11.6 1.2" fill="none" stroke="#1a1a1a" stroke-width="1.5"/></svg>
<div class="t fs" style="top:165px;height:27px;line-height:27px;letter-spacing:0.28px;left:28.7px;">Details</div>
<div class="t fs" style="top:192px;height:27px;line-height:27px;letter-spacing:-0.17px;left:53.1px;width:94.4px;overflow:hidden;">优化器</div>
<div class="t fs" style="top:192px;height:27px;line-height:27px;letter-spacing:0.03px;left:152.5px;">ANALYZED</div>
<div class="t fs" style="top:219px;height:27px;line-height:27px;left:53.1px;width:94.4px;overflow:hidden;">字节</div>
<div class="t fs" style="top:219px;height:27px;line-height:27px;letter-spacing:0.47px;left:152.5px;">529</div>
<div class="t fs" style="top:246px;height:27px;line-height:27px;letter-spacing:0.42px;left:53.1px;width:94.4px;overflow:hidden;">Partition Start</div>
<div class="t fs" style="top:273px;height:27px;line-height:27px;letter-spacing:0.42px;left:53.1px;width:94.4px;overflow:hidden;">Partition Stop</div>
<div class="t fs" style="top:300px;height:27px;line-height:27px;letter-spacing:0.49px;left:53.1px;width:94.4px;overflow:hidden;">Partition ID</div>
<div class="t fs" style="top:300px;height:27px;line-height:27px;left:152.5px;">0</div>
<div class="t fs" style="top:327px;height:27px;line-height:27px;letter-spacing:0.8px;left:53.1px;width:94.4px;overflow:hidden;">Distribution</div>
<div class="t fs" style="top:354px;height:27px;line-height:27px;letter-spacing:-0.53px;left:53.1px;width:94.4px;overflow:hidden;">CPU Cost</div>
<div class="t fs" style="top:354px;height:27px;line-height:27px;letter-spacing:0.23px;left:152.5px;">24,593</div>
<div class="t fs" style="top:381px;height:27px;line-height:27px;letter-spacing:-0.1px;left:53.1px;width:94.4px;overflow:hidden;">IO Cost</div>
<div class="t fs" style="top:381px;height:27px;line-height:27px;left:152.5px;">2</div>
<div class="t fs" style="top:408px;height:27px;line-height:27px;letter-spacing:0.22px;left:53.1px;width:94.4px;overflow:hidden;">Temp Space</div>
<div class="t fs" style="top:408px;height:27px;line-height:27px;left:152.5px;">0</div>
<div class="t fs" style="top:435px;height:27px;line-height:27px;letter-spacing:-0.31px;left:53.1px;width:94.4px;overflow:hidden;">Access Predicates</div>
<div class="t fs" style="top:460.5px;height:27px;line-height:27px;letter-spacing:0.42px;left:53.1px;width:94.4px;overflow:hidden;">Filter Predicates</div>
</div>
<div style="left:21px;top:1132px;width:1794px;height:19px;background:#f0f0f0;"></div>
<svg style="left:1806px;top:1137px" width="9" height="14" viewBox="0 0 9 14"><rect x="1.6" y="1.7" width="10" height="14" fill="#84e294" stroke="#00a82d" stroke-width="1.4"/><rect x="3.6" y="1.9" width="8" height="4.8" fill="#fff" stroke="#00a82d" stroke-width="1.2"/><rect x="7.8" y="3" width="2" height="3" fill="#00a82d"/></svg>
<svg style="left:0;top:0;pointer-events:none" width="1815" height="1151" viewBox="0 0 1815 1151"><rect x="925.35" y="61.45" width="882.5" height="261.7" fill="none" stroke="#f75151" stroke-width="6.3" stroke-linejoin="round"/><rect x="106.4" y="595.4" width="204.6" height="42.4" fill="none" stroke="#f75151" stroke-width="5.8" stroke-linejoin="round"/></svg>
</body></html>
